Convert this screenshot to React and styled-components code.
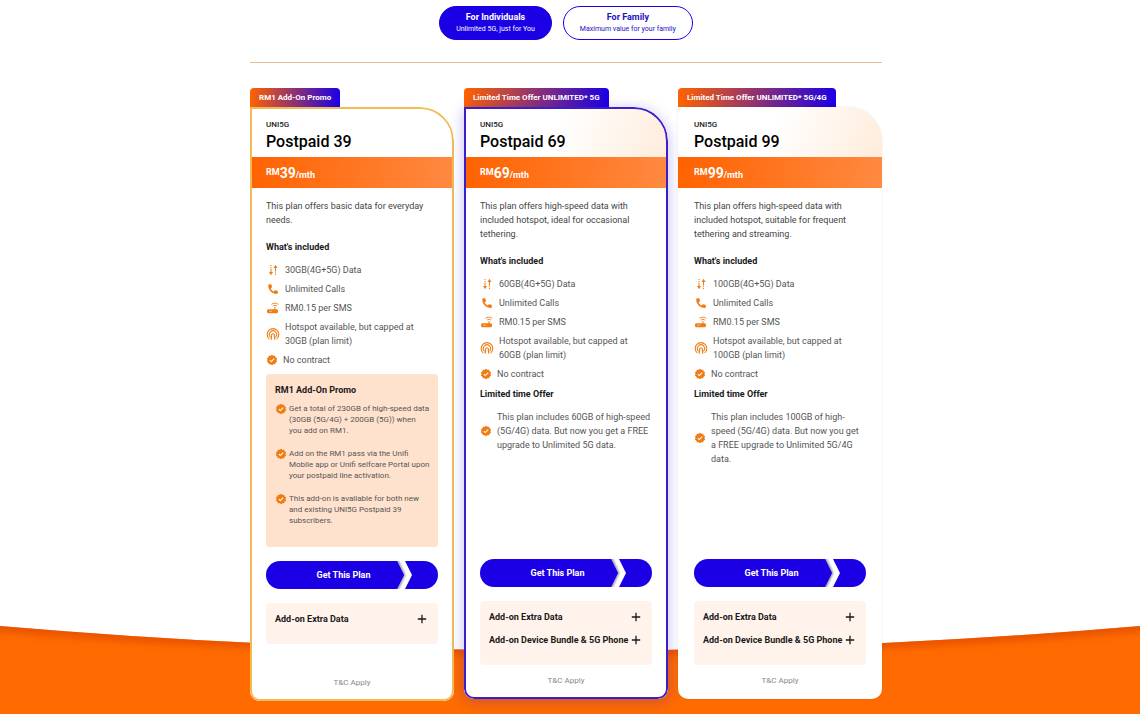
import React from 'react';
import styled, { createGlobalStyle } from 'styled-components';

const PLANS = [
  {
    id: 'postpaid-39',
    theme: 'gold',
    tag: 'RM1 Add-On Promo',
    name: 'Postpaid 39',
    price: '39',
    desc: 'This plan offers basic data for everyday needs.',
    data: '30GB',
    promo: [
      'Get a total of 230GB of high-speed data (30GB (5G/4G) + 200GB (5G)) when you add on RM1.',
      'Add on the RM1 pass via the Unifi Mobile app or Unifi selfcare Portal upon your postpaid line activation.',
      'This add-on is available for both new and existing UNI5G Postpaid 39 subscribers.',
    ],
    addons: ['Add-on Extra Data'],
  },
  {
    id: 'postpaid-69',
    theme: 'blue',
    tag: 'Limited Time Offer UNLIMITED* 5G',
    name: 'Postpaid 69',
    price: '69',
    desc: 'This plan offers high-speed data with included hotspot, ideal for occasional tethering.',
    data: '60GB',
    offer:
      'This plan includes 60GB of high-speed (5G/4G) data. But now you get a FREE upgrade to Unlimited 5G data.',
    addons: ['Add-on Extra Data', 'Add-on Device Bundle & 5G Phone'],
  },
  {
    id: 'postpaid-99',
    theme: 'plain',
    tag: 'Limited Time Offer UNLIMITED* 5G/4G',
    name: 'Postpaid 99',
    price: '99',
    desc: 'This plan offers high-speed data with included hotspot, suitable for frequent tethering and streaming.',
    data: '100GB',
    offer:
      'This plan includes 100GB of high-speed (5G/4G) data. But now you get a FREE upgrade to Unlimited 5G/4G data.',
    addons: ['Add-on Extra Data', 'Add-on Device Bundle & 5G Phone'],
  },
];

const BORDERS = {
  gold: '2px solid #f2bc55',
  blue: '2px solid #3c1fcb',
  plain: '0',
};
const SHADOWS = {
  gold: 'none',
  blue: '0 2px 14px rgba(40, 10, 230, 0.28)',
  plain: '0 0 2px rgba(0, 0, 0, 0.12)',
};

const DataIcon = () => (
  <Icon viewBox="0 0 14 14">
    <path d="M5 5.500v5" stroke="#f07d14" strokeWidth="1" />
    <path d="M5 2v3" stroke="#f07d14" strokeWidth="1" strokeDasharray="1 .8" />
    <path d="M3 9h4l-2 3.200z" fill="#f07d14" />
    <path d="M9.500 4v4.500" stroke="#f07d14" strokeWidth="1" />
    <path d="M9.500 9.200v3" stroke="#f07d14" strokeWidth="1" strokeDasharray="1 .8" />
    <path d="M7.500 5h4l-2-3.200z" fill="#f07d14" />
  </Icon>
);

const PhoneIcon = () => (
  <Icon viewBox="0 0 14 14">
    <path
      d="M2.200 3.400c0-.7.6-1.100 1.300-1.100h1.300c.4 0 .7.3.8.7l.4 1.700c.1.300 0 .6-.3.800l-1.100 1.100c.8 1.400 1.600 2.200 3 3l1.100-1.200c.2-.2.5-.3.8-.2l1.700.5c.4.100.7.400.7.800v1.200c0 .7-.5 1.200-1.200 1.200-4.700-.2-8.400-3.900-8.500-8.500z"
      fill="#f07d14"
    />
  </Icon>
);

const RouterIcon = () => (
  <Icon viewBox="0 0 14 14">
    <path
      d="M2.500 8.200h5.900V6h1v2.200h1.100c.9 0 1.500.6 1.500 1.500v1c0 .9-.6 1.500-1.500 1.500h-8c-.9 0-1.500-.6-1.500-1.500v-1c0-.9.600-1.500 1.500-1.500z"
      fill="#f07d14"
    />
    <path d="M3 10.200h3" stroke="#fff" strokeWidth=".7" strokeDasharray=".7 .5" />
    <path
      d="M5.400 3.400c2-1.700 5-1.700 7 0M6.800 5.200c1.200-1.100 3-1.100 4.200 0"
      fill="none"
      stroke="#f07d14"
      strokeWidth=".9"
    />
  </Icon>
);

const HotspotIcon = () => (
  <Icon viewBox="0 0 14 14">
    <g fill="none" stroke="#f07d14" strokeWidth="1.100" strokeLinecap="round">
      <path d="M3 11.600a5.800 5.800 0 1 1 8 0" />
      <path d="M4.300 9.800a3.600 3.600 0 1 1 5.400 0" />
      <path d="M5.200 12.400l.5-4a1.350 1.350 0 1 1 2.600 0l.5 4" />
    </g>
  </Icon>
);

const CheckIcon = () => (
  <CheckSvg viewBox="-1 -1 26 26">
    <path
      d="M12 .8l3 2.200 3.700-.2 1.100 3.500 3.100 2.100L21.800 12l1.100 3.600-3.100 2.100-1.100 3.500-3.700-.2-3 2.200-3-2.200-3.700.2-1.100-3.500-3.100-2.100L2.200 12 1.100 8.400l3.100-2.100 1.100-3.500L9 3z"
      fill="#f07d14"
    />
    <path d="M7.300 12.300l3.200 3.200 6.200-6.600" fill="none" stroke="#fff" strokeWidth="2.200" />
  </CheckSvg>
);

const PlusIcon = () => (
  <PlusSvg viewBox="0 0 10 10">
    <path d="M5 .8v8.400M.8 5h8.400" stroke="#1a1a1a" strokeWidth="1.300" />
  </PlusSvg>
);

const ButtonArrow = () => (
  <ArrowSvg viewBox="0 0 24 28">
    <defs>
      <filter id="arrowBlur" x="-50%" y="-20%" width="200%" height="140%">
        <feGaussianBlur stdDeviation="1" />
      </filter>
    </defs>
    <path d="M3 0h8l7 14-7 14H3l7-14z" fill="#fff" />
    <path
      d="M3 -1l7 15-7 15"
      fill="none"
      stroke="#77738f"
      strokeWidth="2"
      filter="url(#arrowBlur)"
    />
    <path d="M0 0h3l7 14-7 14H0z" fill="#1b00e6" />
  </ArrowSvg>
);

const PlanCard = ({ plan }) => (
  <Plan>
    <Tag>{plan.tag}</Tag>
    <Card $theme={plan.theme}>
      <Head $tinted={plan.theme !== 'gold'}>
        <Series>UNI5G</Series>
        <PlanName>{plan.name}</PlanName>
      </Head>
      <Price>
        <Currency>RM</Currency>
        <Amount>{plan.price}</Amount>
        <Period>/mth</Period>
      </Price>
      <Body>
        <Text>{plan.desc}</Text>
        <SubTitle>What&apos;s included</SubTitle>
        <FeatureList>
          <Feature><DataIcon />{plan.data}(4G+5G) Data</Feature>
          <Feature><PhoneIcon />Unlimited Calls</Feature>
          <Feature><RouterIcon />RM0.15 per SMS</Feature>
          <Feature>
            <HotspotIcon />
            <span>Hotspot available, but capped at {plan.data} (plan limit)</span>
          </Feature>
          <Feature><CheckIcon />No contract</Feature>
        </FeatureList>
        {plan.promo && (
          <Promo>
            <PromoTitle>RM1 Add-On Promo</PromoTitle>
            <PromoList>
              {plan.promo.map((text) => (
                <PromoItem key={text}><CheckIcon /><span>{text}</span></PromoItem>
              ))}
            </PromoList>
          </Promo>
        )}
        {plan.offer && (
          <>
            <OfferTitle>Limited time Offer</OfferTitle>
            <Feature as="p"><CheckIcon />{plan.offer}</Feature>
          </>
        )}
      </Body>
      <Footer>
        <PlanButton type="button">Get This Plan<ButtonArrow /></PlanButton>
        <AddonArea>
          <Addons>
            {plan.addons.map((addon) => (
              <AddonButton type="button" key={addon}>{addon}<PlusIcon /></AddonButton>
            ))}
          </Addons>
        </AddonArea>
        <Terms>T&amp;C Apply</Terms>
      </Footer>
    </Card>
  </Plan>
);

const App = () => {
  return (
    <>
      <GlobalStyle />
      <Page>
        <Wave viewBox="0 0 1140 88" preserveAspectRatio="none">
          <defs>
            <clipPath id="waveClip">
              <path d="M0 0Q570 49 1140 0V88H0z" />
            </clipPath>
            <filter id="waveBlur" x="-5%" y="-50%" width="110%" height="200%">
              <feGaussianBlur stdDeviation="5" />
            </filter>
          </defs>
          <path d="M0 0Q570 49 1140 0V88H0z" fill="#ff6b00" />
          <g clipPath="url(#waveClip)">
            <path
              d="M-20 -2Q570 49 1160 -2"
              fill="none"
              stroke="#e04a00"
              strokeWidth="9"
              filter="url(#waveBlur)"
            />
          </g>
        </Wave>
        <Container>
          <Switcher>
            <Choice type="button" $active>
              <ChoiceTitle>For Individuals</ChoiceTitle>
              <ChoiceText>Unlimited 5G, just for You</ChoiceText>
            </Choice>
            <Choice type="button">
              <ChoiceTitle>For Family</ChoiceTitle>
              <ChoiceText>Maximum value for your family</ChoiceText>
            </Choice>
          </Switcher>
          <Plans>
            {PLANS.map((plan) => (
              <PlanCard key={plan.id} plan={plan} />
            ))}
          </Plans>
        </Container>
      </Page>
    </>
  );
};

export default App;

const GlobalStyle = createGlobalStyle`
  * {
    box-sizing: border-box;
  }
  body {
    margin: 0;
    background: #fff;
    color: #1a1a1a;
    font-family: Roboto, 'Liberation Sans', sans-serif;
    font-size: 9px;
    line-height: 14px;
  }
  h2, h3, h4, p, ul {
    margin: 0;
    padding: 0;
  }
  button {
    font-family: inherit;
    cursor: pointer;
  }
`;

const Page = styled.main`
  position: relative;
  min-height: 100vh;
  padding: 6px 24px 12px 16px;
`;

const Wave = styled.svg`
  position: absolute;
  left: 0;
  bottom: 0;
  width: 100%;
  height: 88px;
`;

const Container = styled.div`
  position: relative;
  max-width: 632px;
  margin: 0 auto;
`;

const Switcher = styled.div`
  display: flex;
  justify-content: center;
  gap: 11px;
  padding-bottom: 22px;
  border-bottom: 1px solid #e9bd94;
`;

const Choice = styled.button`
  height: 34px;
  padding: 0 16px;
  border: 1px solid #1b00e6;
  border-radius: 17px;
  background: ${({ $active }) => ($active ? '#1b00e6' : '#fff')};
  color: ${({ $active }) => ($active ? '#fff' : '#2410c4')};
`;

const ChoiceTitle = styled.span`
  display: block;
  font-size: 9px;
  font-weight: 700;
  line-height: 12px;
`;

const ChoiceText = styled.span`
  display: block;
  font-size: 7px;
  line-height: 12px;
`;

const Plans = styled.div`
  display: grid;
  grid-template-columns: repeat(auto-fit, minmax(200px, 1fr));
  align-items: start;
  gap: 10px;
  padding-top: 25px;
`;

const Plan = styled.article`
  display: flex;
  flex-direction: column;
  align-items: flex-start;
`;

const Tag = styled.div`
  height: 19px;
  padding: 0 9px;
  border-radius: 4px 4px 0 0;
  background: linear-gradient(90deg, #ff6200, #1b00e6);
  color: #fff;
  font-size: 8px;
  font-weight: 700;
  line-height: 19px;
`;

const Card = styled.section`
  position: relative;
  width: 100%;
  overflow: hidden;
  border-radius: 0 34px 10px 10px;
  background: #fff;
  box-shadow: ${({ $theme }) => SHADOWS[$theme]};

  &::after {
    content: '';
    position: absolute;
    inset: 0;
    border: ${({ $theme }) => BORDERS[$theme]};
    border-radius: inherit;
    pointer-events: none;
  }
`;

const Head = styled.header`
  padding: 11px 16px 5px;
  background: ${({ $tinted }) =>
    $tinted ? 'linear-gradient(110deg, #fff 45%, #ffecdb)' : '#fff'};
`;

const Series = styled.p`
  font-size: 8px;
  font-weight: 500;
`;

const PlanName = styled.h2`
  color: #000;
  font-size: 16px;
  font-weight: 500;
  line-height: 20px;
`;

const Price = styled.div`
  height: 31px;
  padding: 0 16px;
  background: linear-gradient(100deg, #ff6200, #ff8a42);
  color: #fff;
  font-weight: 700;
  line-height: 31px;
`;

const Currency = styled.span`
  font-size: 9px;
  vertical-align: 3px;
`;

const Amount = styled.span`
  font-size: 14px;
`;

const Period = styled.span`
  font-size: 9px;
`;

const Body = styled.div`
  min-height: 371px;
  padding: 11px 16px 14px;
`;

const Text = styled.p`
  color: #444;
`;

const SubTitle = styled.h3`
  margin-top: 13px;
  font-size: 9px;
  font-weight: 700;
`;

const FeatureList = styled.ul`
  display: flex;
  flex-direction: column;
  gap: 5px;
  margin-top: 9px;
  list-style: none;
`;

const Feature = styled.li`
  display: flex;
  align-items: center;
  gap: 5px;
  padding-right: 1px;
  color: #555;
`;

const Icon = styled.svg`
  flex: none;
  width: 14px;
  height: 14px;
`;

const CheckSvg = styled.svg`
  flex: none;
  width: 12px;
  height: 12px;
`;

const Promo = styled.div`
  margin-top: 7px;
  padding: 9px 8px 21px 9px;
  border-radius: 4px;
  background: #ffe2cd;
`;

const PromoTitle = styled.h4`
  font-size: 9px;
  font-weight: 700;
`;

const PromoList = styled.ul`
  display: flex;
  flex-direction: column;
  gap: 12px;
  margin-top: 6px;
  list-style: none;
`;

const PromoItem = styled.li`
  display: flex;
  align-items: flex-start;
  gap: 2px;
  color: #555;
  font-size: 8px;
  line-height: 11px;
`;

const OfferTitle = styled.h3`
  margin: 6px 0 9px;
  font-size: 9px;
  font-weight: 700;
`;

const Footer = styled.footer`
  padding: 0 16px 11px;
`;

const PlanButton = styled.button`
  position: relative;
  display: block;
  width: 100%;
  height: 28px;
  padding: 0 17px 0 0;
  border: 0;
  border-radius: 14px;
  background: #1b00e6;
  color: #fff;
  font-size: 9px;
  font-weight: 700;
`;

const ArrowSvg = styled.svg`
  position: absolute;
  top: 0;
  right: 20px;
  width: 24px;
  height: 28px;
`;

const AddonArea = styled.div`
  min-height: 80px;
  padding-top: 14px;
`;

const Addons = styled.div`
  display: flex;
  flex-direction: column;
  gap: 9px;
  padding: 9px 11px 18px 9px;
  border-radius: 4px;
  background: #fff3eb;
`;

const AddonButton = styled.button`
  display: flex;
  justify-content: space-between;
  align-items: center;
  padding: 0;
  border: 0;
  background: none;
  color: #1a1a1a;
  font-size: 9px;
  font-weight: 700;
  line-height: 14px;
  text-align: left;
  white-space: nowrap;
`;

const PlusSvg = styled.svg`
  flex: none;
  width: 10px;
  height: 10px;
`;

const Terms = styled.p`
  margin-top: 7px;
  color: #888;
  font-size: 8px;
  text-align: center;
`;
